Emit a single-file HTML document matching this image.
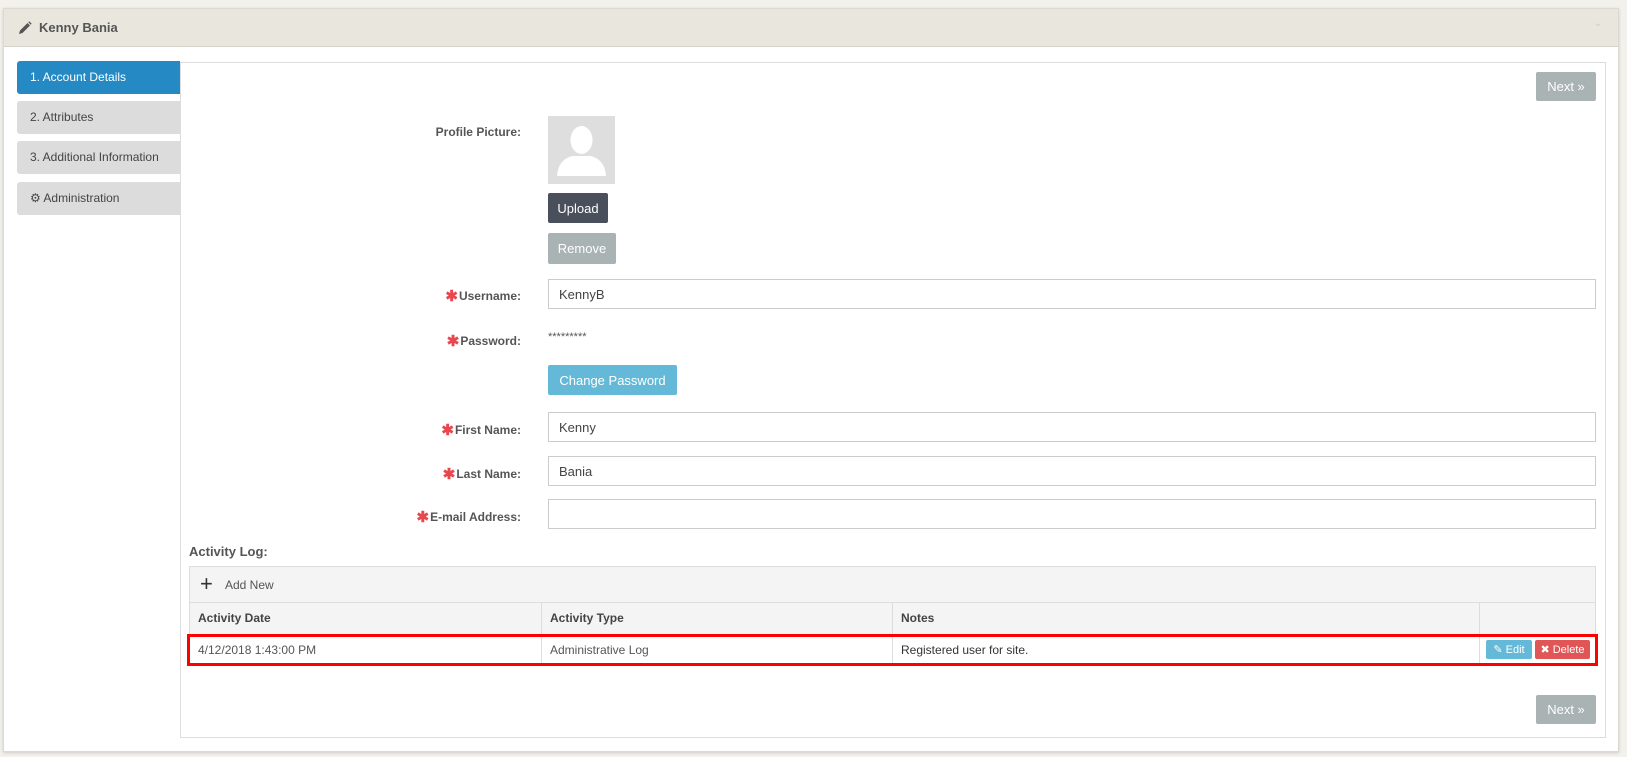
<!DOCTYPE html>
<html><head><meta charset="utf-8"><style>
*{box-sizing:border-box;margin:0;padding:0}
body{width:1627px;height:757px;background:#f3f1ec;font-family:"Liberation Sans",sans-serif;font-size:12px;color:#555;position:relative;overflow:hidden}
.a{position:absolute}
.card{left:3px;top:8px;width:1616px;height:744px;background:#fff;border:1px solid #dcd9d2;box-shadow:0 1px 3px rgba(0,0,0,.15)}
.hdr{left:4px;top:9px;width:1614px;height:38px;background:#e9e6de;border-bottom:1px solid #d6d3cb}
.tab{left:17px;width:163px;height:33px;background:#dcdcdc;border-radius:3px 0 0 3px;color:#444;padding:9px 0 0 13px;font-size:12px}
.panel{left:180px;top:62px;width:1426px;height:676px;border:1px solid #ddd;background:#fff}
.lbl{width:340px;left:181px;text-align:right;font-weight:bold;color:#555;font-size:12px}
.st{color:#e8484d;font-size:15px;font-weight:bold;position:relative;top:1px;margin-right:1px}
.inp{left:548px;width:1048px;height:30px;border:1px solid #ccc;padding:7px 10px;font-size:13px;color:#444}
.btn{color:#fff;font-size:13px;text-align:center;border-radius:2px}
.next{left:1536px;width:60px;height:29px;background:#a9b3b3;padding-top:7px}
td,th{border-right:1px solid #ddd;text-align:left;padding:0 8px;font-size:12px}
</style></head><body>
<div class="a card"></div>
<div class="a hdr"></div>
<svg class="a" style="left:18px;top:21px" width="14" height="14" viewBox="0 0 14 14"><path d="M1 13 L2 9.5 L9.5 2 L12 4.5 L4.5 12 Z" fill="#555"/><path d="M10.3 1.2 L11.2 .3 L13.7 2.8 L12.8 3.7Z" fill="#555"/></svg>
<div class="a" style="left:39px;top:20px;font-weight:bold;font-size:13px;color:#555">Kenny Bania</div>
<div class="a" style="left:1594px;top:18px;color:#ccc;font-size:10px">⌄</div>
<div class="a panel"></div>
<div class="a tab" style="top:61px;background:#2589c3;color:#fff">1. Account Details</div>
<div class="a tab" style="top:101px">2. Attributes</div>
<div class="a tab" style="top:141px">3. Additional Information</div>
<div class="a tab" style="top:182px">⚙ Administration</div>
<div class="a btn next" style="top:72px">Next »</div>
<div class="a lbl" style="top:125px">Profile Picture:</div>
<div class="a" style="left:548px;top:116px;width:67px;height:68px;background:#dedede;overflow:hidden"><svg width="67" height="68"><ellipse cx="33.5" cy="24" rx="11" ry="14" fill="#fff"/><path d="M9 60 Q10 44 24 40 L43 40 Q57 44 58 60 Z" fill="#fff"/></svg></div>
<div class="a btn" style="left:548px;top:193px;width:60px;height:30px;background:#4a4f5c;padding-top:8px">Upload</div>
<div class="a btn" style="left:548px;top:233px;width:68px;height:31px;background:#a9b3b3;padding-top:8px">Remove</div>
<div class="a lbl" style="top:286px"><span class="st">✱</span>Username:</div>
<div class="a inp" style="top:279px">KennyB</div>
<div class="a lbl" style="top:331px"><span class="st">✱</span>Password:</div>
<div class="a" style="left:548px;top:331px;font-size:11px;color:#555">*********</div>
<div class="a btn" style="left:548px;top:365px;width:129px;height:30px;background:#63b9d7;padding-top:8px">Change Password</div>
<div class="a lbl" style="top:420px"><span class="st">✱</span>First Name:</div>
<div class="a inp" style="top:412px">Kenny</div>
<div class="a lbl" style="top:464px"><span class="st">✱</span>Last Name:</div>
<div class="a inp" style="top:456px">Bania</div>
<div class="a lbl" style="top:507px"><span class="st">✱</span>E-mail Address:</div>
<div class="a inp" style="top:499px"></div>
<div class="a" style="left:189px;top:544px;font-weight:bold;font-size:13px;color:#555">Activity Log:</div>
<div class="a" style="left:189px;top:566px;width:1407px;height:37px;background:#f4f4f4;border:1px solid #ddd"><span style="position:absolute;left:10px;top:4px;font-size:22px;color:#333;font-weight:300">+</span><span style="position:absolute;left:35px;top:11px;font-size:12px;color:#555">Add New</span></div>
<table class="a" style="left:189px;top:603px;width:1407px;border-collapse:collapse;border-left:1px solid #ddd">
<tr style="height:31px;background:#f4f4f4;border-bottom:1px solid #ddd"><th style="width:352px;color:#444">Activity Date</th><th style="width:351px;color:#444">Activity Type</th><th style="width:587px;color:#444">Notes</th><th></th></tr>
<tr style="height:31px"><td>4/12/2018 1:43:00 PM</td><td>Administrative Log</td><td style="color:#333">Registered user for site.</td><td></td></tr>
</table>
<div class="a" style="left:187px;top:634px;width:1411px;height:32px;border:3px solid #f00"></div>
<div class="a btn" style="left:1486px;top:640px;width:46px;height:19px;background:#63b9d7;font-size:11px;padding-top:3px">✎ Edit</div>
<div class="a btn" style="left:1535px;top:640px;width:55px;height:19px;background:#e05555;font-size:11px;padding-top:3px">✖ Delete</div>
<div class="a btn next" style="top:695px">Next »</div>
</body></html>
